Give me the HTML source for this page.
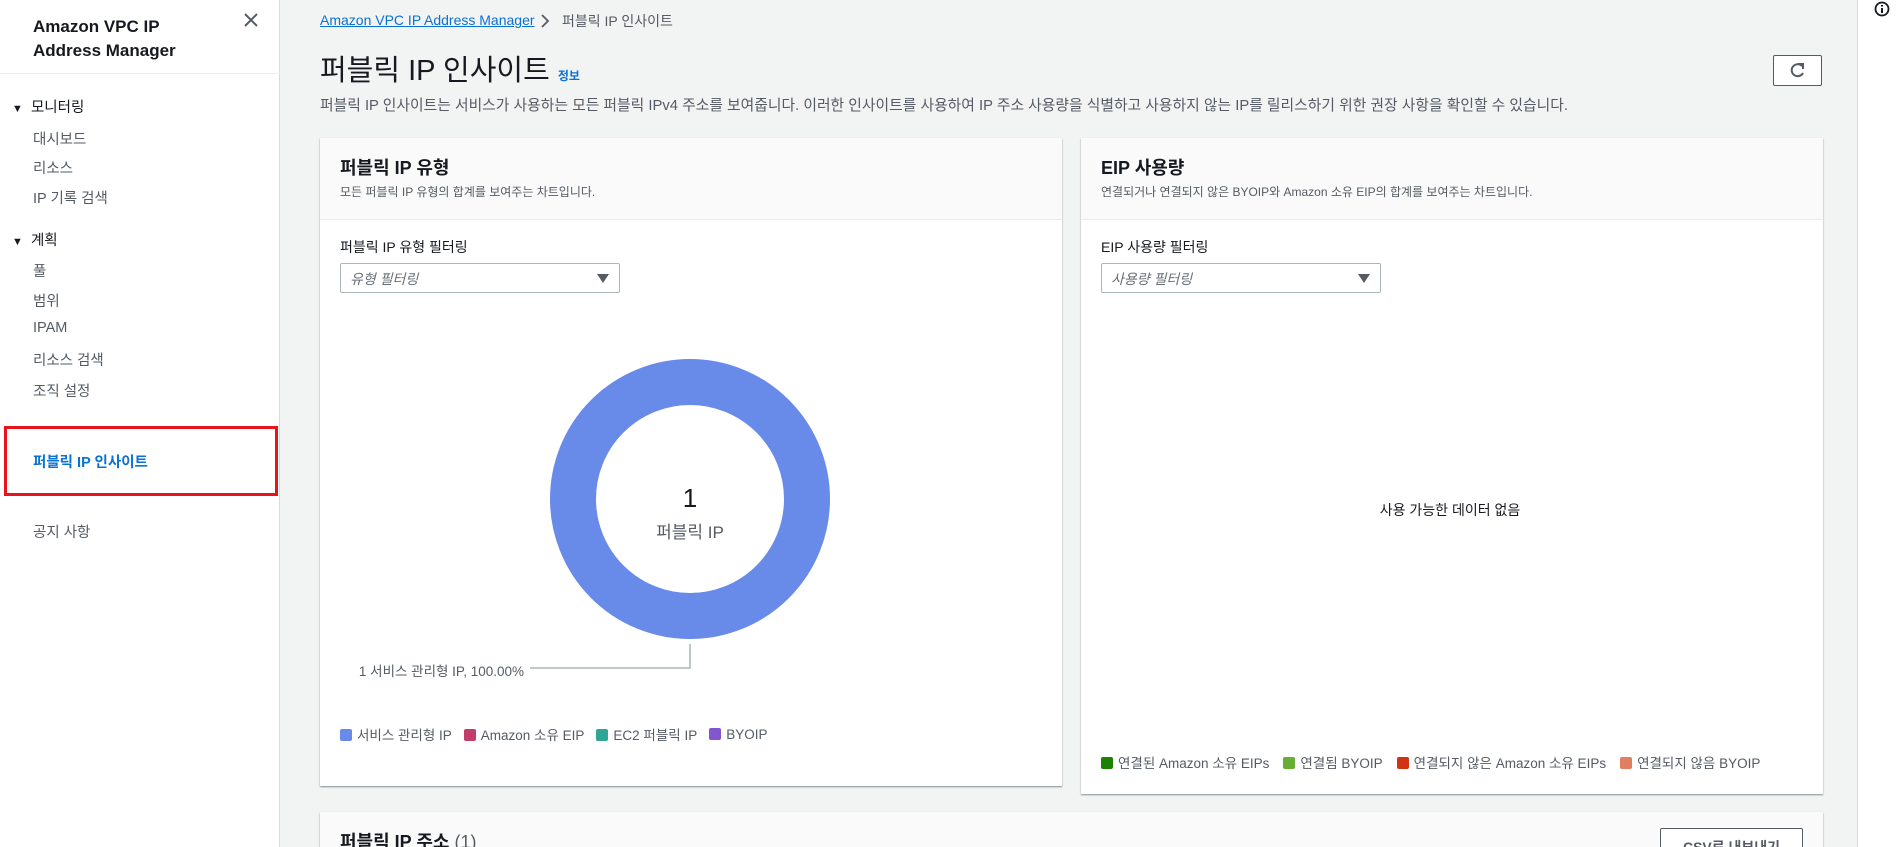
<!DOCTYPE html><html><head><meta charset="utf-8"><style>
*{box-sizing:border-box;margin:0;padding:0}
html,body{width:1898px;height:847px;overflow:hidden}
body{background:#f2f3f3;font-family:"Liberation Sans","Noto Sans CJK KR",sans-serif;color:#16191f;position:relative}
.a{position:absolute;white-space:nowrap}
.sb{left:0;top:0;width:280px;height:847px;background:#fff;border-right:1px solid #d5dbdb}
.nav{font-size:14.5px;color:#545b64;left:33px}
.card{background:#fff;box-shadow:0 1px 1px rgba(0,28,36,.3),0 1px 2px 0 rgba(0,28,36,.2)}
.hd{background:#fafafa;border-bottom:1px solid #eaeded}
.sel{border:1px solid #aab7b8;border-radius:2px;background:#fff;height:30px;font-style:italic;color:#687078;font-size:14px;padding:5px 9px}
.sel:after{content:"";position:absolute;right:10px;top:10px;border:6px solid transparent;border-top:9px solid #545b64;border-bottom:0}
.lg{font-size:13.5px;color:#545b64;display:flex;gap:12px;align-items:center}
.lg i{display:inline-block;width:12px;height:12px;border-radius:2px;margin-right:5px;vertical-align:-1px}
</style></head><body>
<div class="a sb"></div>
<div class="a" style="left:33px;top:15px;font-size:17px;font-weight:bold;line-height:24px">Amazon VPC IP<br>Address Manager</div>
<svg class="a" style="left:243px;top:12px" width="16" height="16"><path d="M2 2L14 14M14 2L2 14" stroke="#545b64" stroke-width="2"/></svg>
<div class="a" style="left:0;top:73px;width:280px;height:1px;background:#eaeded"></div>
<div class="a" style="left:12px;top:96px;font-size:14.5px"><span style="font-size:11px">▼</span>&nbsp; 모니터링</div>
<div class="a nav" style="top:128px">대시보드</div>
<div class="a nav" style="top:157px">리소스</div>
<div class="a nav" style="top:187px">IP 기록 검색</div>
<div class="a" style="left:12px;top:229px;font-size:14.5px"><span style="font-size:11px">▼</span>&nbsp; 계획</div>
<div class="a nav" style="top:260px">풀</div>
<div class="a nav" style="top:290px">범위</div>
<div class="a nav" style="top:320px">IPAM</div>
<div class="a nav" style="top:349px">리소스 검색</div>
<div class="a nav" style="top:380px">조직 설정</div>
<div class="a" style="left:4px;top:426px;width:274px;height:70px;border:3px solid #e8141c"></div>
<div class="a" style="left:33px;top:451px;font-size:14.5px;color:#0972d3;font-weight:bold">퍼블릭 IP 인사이트</div>
<div class="a nav" style="top:521px">공지 사항</div>
<div class="a" style="left:1857px;top:0;width:41px;height:847px;background:#fff;border-left:1px solid #d5dbdb"></div>
<svg class="a" style="left:1874px;top:1px" width="16" height="16"><circle cx="8" cy="8" r="6.5" fill="none" stroke="#16191f" stroke-width="1.8"/><path d="M8 7v5M8 4v1.5" stroke="#16191f" stroke-width="2"/></svg>
<div class="a" style="left:320px;top:12px;font-size:14px;color:#0972d3;text-decoration:underline">Amazon VPC IP Address Manager</div>
<svg class="a" style="left:540px;top:14px" width="10" height="14"><path d="M2 1l6 6-6 6" fill="none" stroke="#545b64" stroke-width="1.8"/></svg>
<div class="a" style="left:562px;top:11px;font-size:14px;color:#545b64">퍼블릭 IP 인사이트</div>
<div class="a" style="left:320px;top:47px;font-size:29px">퍼블릭 IP 인사이트 <span style="font-size:12px;color:#0972d3;font-weight:bold">정보</span></div>
<div class="a" style="left:320px;top:94px;font-size:14.8px;color:#545b64">퍼블릭 IP 인사이트는 서비스가 사용하는 모든 퍼블릭 IPv4 주소를 보여줍니다. 이러한 인사이트를 사용하여 IP 주소 사용량을 식별하고 사용하지 않는 IP를 릴리스하기 위한 권장 사항을 확인할 수 있습니다.</div>
<div class="a" style="left:1773px;top:55px;width:49px;height:31px;border:1px solid #545b64;border-radius:2px;background:#fff"></div>
<svg class="a" style="left:1788px;top:61px" width="20" height="20"><path d="M14 5A6 6 0 1 0 15 12" fill="none" stroke="#545b64" stroke-width="2"/><path d="M10 3h5v5" fill="none" stroke="#545b64" stroke-width="2"/></svg>

<div class="a card" style="left:320px;top:138px;width:742px;height:648px"></div>
<div class="a hd" style="left:320px;top:138px;width:742px;height:82px"></div>
<div class="a" style="left:340px;top:154px;font-size:18px;font-weight:bold">퍼블릭 IP 유형</div>
<div class="a" style="left:340px;top:183px;font-size:12px;color:#545b64">모든 퍼블릭 IP 유형의 합계를 보여주는 차트입니다.</div>
<div class="a" style="left:340px;top:237px;font-size:14px">퍼블릭 IP 유형 필터링</div>
<div class="a sel" style="left:340px;top:263px;width:280px">유형 필터링</div>
<svg class="a" style="left:500px;top:350px" width="340" height="330"><circle cx="190" cy="149" r="117" fill="none" stroke="#688ae8" stroke-width="46"/><path d="M190 294V318H30" fill="none" stroke="#aab7b8" stroke-width="1.5"/></svg>
<div class="a" style="left:590px;top:483px;width:200px;text-align:center;font-size:26px">1</div>
<div class="a" style="left:590px;top:518px;width:200px;text-align:center;font-size:17px;color:#545b64">퍼블릭 IP</div>
<div class="a" style="left:340px;top:660px;font-size:13.5px;color:#545b64;width:184px;text-align:right">1 서비스 관리형 IP, 100.00%</div>
<div class="a lg" style="left:340px;top:724px"><span><i style="background:#688ae8"></i>서비스 관리형 IP</span><span><i style="background:#c33d69"></i>Amazon 소유 EIP</span><span><i style="background:#2ea597"></i>EC2 퍼블릭 IP</span><span><i style="background:#8456ce"></i>BYOIP</span></div>

<div class="a card" style="left:1081px;top:138px;width:742px;height:656px"></div>
<div class="a hd" style="left:1081px;top:138px;width:742px;height:82px"></div>
<div class="a" style="left:1101px;top:154px;font-size:18px;font-weight:bold">EIP 사용량</div>
<div class="a" style="left:1101px;top:183px;font-size:12px;color:#545b64">연결되거나 연결되지 않은 BYOIP와 Amazon 소유 EIP의 합계를 보여주는 차트입니다.</div>
<div class="a" style="left:1101px;top:237px;font-size:14px">EIP 사용량 필터링</div>
<div class="a sel" style="left:1101px;top:263px;width:280px">사용량 필터링</div>
<div class="a" style="left:1300px;top:500px;width:300px;text-align:center;font-size:14px">사용 가능한 데이터 없음</div>
<div class="a lg" style="left:1101px;top:752px;gap:14px"><span><i style="background:#1d8102"></i>연결된 Amazon 소유 EIPs</span><span><i style="background:#69ae34"></i>연결됨 BYOIP</span><span><i style="background:#d13212"></i>연결되지 않은 Amazon 소유 EIPs</span><span><i style="background:#e07f60"></i>연결되지 않음 BYOIP</span></div>

<div class="a card" style="left:320px;top:812px;width:1503px;height:60px;background:#fafafa"></div>
<div class="a" style="left:340px;top:828px;font-size:18px;font-weight:bold">퍼블릭 IP 주소 <span style="font-weight:normal;color:#545b64">(1)</span></div>
<div class="a" style="left:1660px;top:828px;width:143px;height:34px;border:1px solid #545b64;border-radius:2px;background:#fff;font-size:14px;font-weight:bold;color:#545b64;text-align:center;padding-top:8px">CSV로 내보내기</div>
</body></html>
